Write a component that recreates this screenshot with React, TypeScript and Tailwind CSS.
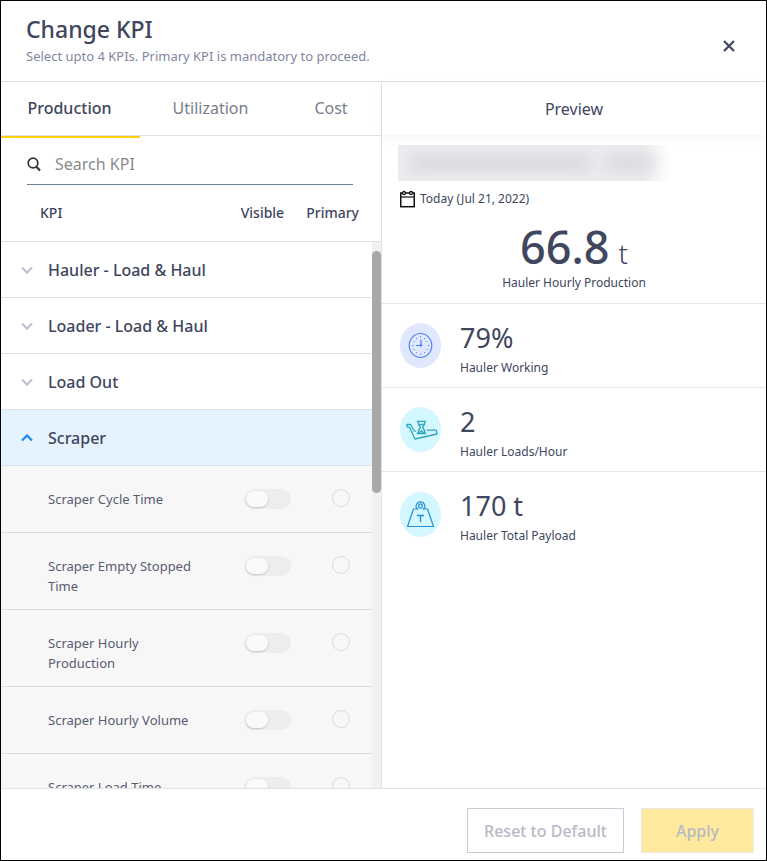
import { useState } from "react";
import { clsx } from "clsx";

const tabs = [
  { name: "Production", className: "w-[139px]" },
  { name: "Utilization", className: "w-[143px]" },
  { name: "Cost", className: "flex-1" },
];

const closedGroups = ["Hauler - Load & Haul", "Loader - Load & Haul", "Load Out"];

const scraperKpis = [
  "Scraper Cycle Time",
  "Scraper Empty Stopped Time",
  "Scraper Hourly Production",
  "Scraper Hourly Volume",
  "Scraper Load Time",
];

const previewKpis = [
  { value: "79%", label: "Hauler Working", icon: <ClockIcon /> },
  { value: "2", label: "Hauler Loads/Hour", icon: <LoadsIcon /> },
  { value: "170 t", label: "Hauler Total Payload", icon: <PayloadIcon /> },
];

function ClockIcon() {
  return (
    <svg width="41" height="45" viewBox="0 0 41 45" fill="none" aria-hidden="true">
      <ellipse cx="20.5" cy="22.5" rx="20.5" ry="22.5" fill="#e0e8ff" />
      <g stroke="#4f7df0" strokeLinecap="round">
        <ellipse cx="20.5" cy="22.5" rx="11.3" ry="12" strokeWidth="1.1" />
        <path d="M21 17v5.5h-4.5" strokeWidth="1.2" />
        <path
          d="M20.5 13.5v.5M20.5 31v.5M12.5 22.5h.5M28.5 22.5h.5M16.5 15.5v.2M24.5 15.5v.2M14 18.5v.2M27 18.5v.2M14 26.5v.2M27 26.5v.2M16.5 29.5v.2M24.5 29.5v.2"
          strokeWidth="1"
        />
      </g>
      <circle cx="21" cy="22.5" r="1.2" fill="#4f7df0" />
    </svg>
  );
}

function LoadsIcon() {
  return (
    <svg width="41" height="45" viewBox="0 0 41 45" fill="none" aria-hidden="true">
      <ellipse cx="20.5" cy="22.5" rx="20.5" ry="22.5" fill="#d3f8ff" />
      <g stroke="#2fa5bd" strokeWidth="1.3" strokeLinejoin="round">
        <path d="M16 24.500l-1.700-.5-3.800-6.500H6.800l.5 2.300 2.200.5 5.500 11.700L37 27l-.7-3.800H26.500" />
        <path d="M16.800 14.300h9.400M16.800 26.500h9.400" />
        <path d="M18 14.300c0 3 .5 4.300 2.500 6.100-2 1.800-2.500 3.100-2.500 6.100M25 14.300c0 3-.5 4.300-2.500 6.100 2 1.800 2.500 3.100 2.500 6.100" />
        <path d="M19.200 17.500h4.600M19.500 26l2-2.200 2 2.200" />
      </g>
    </svg>
  );
}

function PayloadIcon() {
  return (
    <svg width="41" height="45" viewBox="0 0 41 45" fill="none" aria-hidden="true">
      <ellipse cx="20.5" cy="22.5" rx="20.5" ry="22.5" fill="#d3f8ff" />
      <g stroke="#2a8fd0" strokeWidth="1.2" strokeLinejoin="round">
        <path d="M18 17h-4.5L7.5 34.500h26L27.500 17H23" />
        <path d="M18 17.500c-2-1.500-2.300-3.500-1.500-5 1.500-3.500 6.500-3.500 8 0 .8 1.500.5 3.500-1.500 5" />
        <ellipse cx="20.5" cy="14" rx="1.8" ry="2.2" />
        <path d="M17 23.500h7M20.500 23.500V30" strokeWidth="1.4" />
      </g>
    </svg>
  );
}

function CalendarIcon() {
  return (
    <svg width="15" height="18" viewBox="0 0 15 18" fill="none" stroke="#111" aria-hidden="true">
      <rect x=".75" y="3" width="13.5" height="13.7" strokeWidth="1.5" />
      <path d="M1 7h13" strokeWidth="1.2" />
      <circle cx="4" cy="3" r="1.5" strokeWidth="1.3" fill="#fff" />
      <circle cx="11" cy="3" r="1.5" strokeWidth="1.3" fill="#fff" />
    </svg>
  );
}

function Chevron({ open }: { open?: boolean }) {
  return (
    <svg
      width="12"
      height="8"
      viewBox="0 0 12 8"
      fill="none"
      strokeWidth="2.2"
      className={open ? "stroke-[#1e88f0]" : "stroke-[#bcc3d0]"}
      aria-hidden="true"
    >
      <path d={open ? "M1 6.500l5-5 5 5" : "M1 1.500l5 5 5-5"} />
    </svg>
  );
}

const KpiRow = ({ name }: { name: string }) => (
  <li className="flex min-h-[67px] items-start border-b border-[#d9dcde] bg-[#f7f7f7] pt-[23px] pr-[22px] pb-[13px] pl-[47px]">
    <span className="flex-1 pr-10 text-[13px] leading-5 text-[#575c72]">{name}</span>
    <input
      type="checkbox"
      aria-label={`${name} visible`}
      className="mr-[41px] h-5 w-[47px] shrink-0 appearance-none rounded-full bg-[#ebedee] p-[2px] before:block before:h-4 before:w-[22px] before:rounded-full before:bg-[#fafafa] before:shadow-[0_1px_2px_rgba(0,0,0,0.18)] checked:bg-[#ffe99c] checked:before:translate-x-5"
    />
    <input
      type="radio"
      name="primary"
      aria-label={`${name} primary`}
      className="h-[18px] w-[18px] shrink-0 appearance-none rounded-full border border-[#d8dadc] checked:border-4 checked:border-[#ffcd11]"
    />
  </li>
);

const App = () => {
  const [activeTab, setActiveTab] = useState("Production");
  const [scraperOpen, setScraperOpen] = useState(true);

  return (
    <div className="flex h-screen flex-col border border-black bg-white font-['Noto_Sans',sans-serif] text-[#40465e]">
      <header className="flex items-center justify-between border-b border-[#dcdfe3] pt-[12px] pr-[30px] pb-[14px] pl-[25px]">
        <div>
          <h1 className="text-[23px] leading-8 font-medium">Change KPI</h1>
          <p className="text-[13px] leading-[22px] text-[#7f86a0]">
            Select upto 4 KPIs. Primary KPI is mandatory to proceed.
          </p>
        </div>
        <button type="button" aria-label="Close" className="pt-3">
          <svg width="14" height="14" viewBox="0 0 14 14" stroke="#40465e" strokeWidth="2.2">
            <path d="M2 2l10 10M12 2L2 12" />
          </svg>
        </button>
      </header>

      <main className="grid min-h-0 flex-1 grid-cols-[381fr_384fr]">
        <section className="flex min-h-0 flex-col border-r border-[#dfe1ea]">
          <nav className="flex h-[54px] shrink-0 border-b border-[#dfe1ea]">
            {tabs.map((tab) => (
              <button
                key={tab.name}
                type="button"
                onClick={() => setActiveTab(tab.name)}
                className={clsx(
                  "-mb-[3px] border-b-2 pr-[2px] pb-[2px] text-base",
                  tab.className,
                  activeTab === tab.name
                    ? "border-[#ffcd11] font-medium"
                    : "border-transparent text-[#7a7d8c]"
                )}
              >
                {tab.name}
              </button>
            ))}
          </nav>

          <label className="mt-2 mr-[28px] ml-[26px] flex h-[41px] shrink-0 items-center gap-[14px] border-b border-[#6f7f9b]">
            <svg width="14" height="16" viewBox="0 0 14 16" fill="none" stroke="#333" aria-hidden="true">
              <circle cx="6" cy="7" r="4.8" strokeWidth="1.7" />
              <path d="M9.300 10.700l3.700 3.800" strokeWidth="2.2" />
            </svg>
            <input
              type="search"
              aria-label="Search KPI"
              placeholder="Search KPI"
              className="min-w-0 flex-1 text-base outline-none placeholder:text-[#8a8a8a]"
            />
          </label>

          <div className="flex h-[57px] shrink-0 items-center border-b border-[#dfe1ea] pr-[22px] pl-[39px] text-sm font-medium">
            <span className="flex-1">KPI</span>
            <span className="mr-[22px]">Visible</span>
            <span>Primary</span>
          </div>

          <div className="flex min-h-0 flex-1">
            <div className="min-w-0 flex-1 overflow-hidden">
              {closedGroups.map((group) => (
                <button
                  key={group}
                  type="button"
                  className="flex h-14 w-full items-center gap-[15px] border-b border-[#dfe1ea] pl-5 text-base font-medium"
                >
                  <Chevron />
                  {group}
                </button>
              ))}
              <button
                type="button"
                aria-expanded={scraperOpen}
                onClick={() => setScraperOpen(!scraperOpen)}
                className="flex h-14 w-full items-center gap-[15px] border-b border-[#dfe1ea] bg-[#e5f3ff] pl-5 text-base font-medium"
              >
                <Chevron open={scraperOpen} />
                Scraper
              </button>
              {scraperOpen && (
                <ul>
                  {scraperKpis.map((kpi) => (
                    <KpiRow key={kpi} name={kpi} />
                  ))}
                </ul>
              )}
            </div>
            <div className="w-[9px] bg-[#f1f1f1] pt-[9px]" aria-hidden="true">
              <div className="h-[45%] rounded-full bg-[#a8a8a8]" />
            </div>
          </div>
        </section>

        <section>
          <h2 className="flex h-[53px] items-center justify-center text-base shadow-[0_4px_10px_rgba(0,0,0,0.04)]">
            Preview
          </h2>
          <div className="border-b border-[#e3e5ee] px-4 pt-[10px] pb-3">
            <div className="h-9 w-[272px] overflow-hidden bg-linear-to-r from-[#ededf0] from-90% to-transparent">
              <div className="flex h-full items-center gap-4 px-3 blur-[8px]">
                <div className="h-3 w-[180px] bg-[#cfcfd6]" />
                <div className="h-3 w-[48px] bg-[#d2d2d8]" />
              </div>
            </div>
            <p className="mt-2 flex items-center gap-[5px] pl-[2px] text-xs leading-5">
              <CalendarIcon />
              Today (Jul 21, 2022)
            </p>
            <p className="mt-4 flex items-baseline justify-center gap-[9px] text-[45px] leading-11 font-medium">
              66.8 <span className="text-[28px] font-light">t</span>
            </p>
            <p className="text-center text-xs leading-4">Hauler Hourly Production</p>
          </div>
          <ul>
            {previewKpis.map((kpi) => (
              <li
                key={kpi.label}
                className="flex h-[84px] items-center gap-[19px] border-b border-[#e3e5ee] pl-[18px] last:border-b-0"
              >
                {kpi.icon}
                <div className="pt-2">
                  <p className="text-[27px] leading-9">{kpi.value}</p>
                  <p className="text-xs leading-6">{kpi.label}</p>
                </div>
              </li>
            ))}
          </ul>
        </section>
      </main>

      <footer className="flex justify-end gap-[17px] border-t border-[#e3e3e6] pt-[19px] pr-3 pb-[7px] text-base font-medium text-[#b7b9c4]">
        <button type="button" className="h-[45px] w-[157px] border border-[#c8ccd6]">
          Reset to Default
        </button>
        <button type="button" className="h-[45px] w-[113px] border border-[#ebebeb] bg-[#ffe99c]">
          Apply
        </button>
      </footer>
    </div>
  );
};

export default App;
